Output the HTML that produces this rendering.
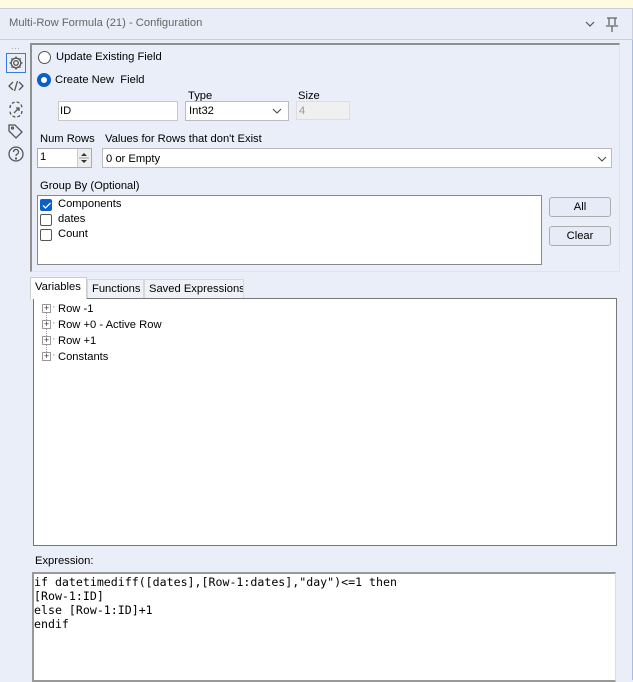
<!DOCTYPE html>
<html><head><meta charset="utf-8"><style>
*{box-sizing:border-box;margin:0;padding:0}
body{width:633px;height:680px;overflow:hidden;background:#e9eef8;font-family:"Liberation Sans",sans-serif;font-size:11.2px;color:#000;position:relative}
.a{position:absolute;white-space:nowrap}
.box{position:absolute;background:#fff;border:1px solid #c8c8c8}
.cb{position:absolute;width:12px;height:12px;border:1px solid #555;border-radius:2px;background:#fff}
.btn{position:absolute;width:62px;height:20px;background:#e6ebf7;border:1px solid #adadad;border-radius:3px;text-align:center;line-height:18px}
.pl{position:absolute;width:9px;height:9px;border:1px solid #999;background:#fff;font-size:9px;line-height:7px;text-align:center;color:#333}
.tab{position:absolute;top:279px;height:19px;line-height:18px;padding:0 4px;background:#eef1f7;border:1px solid #d8d8d8;border-bottom:none;white-space:nowrap;overflow:hidden}
</style></head><body>
<div class="a" style="left:0;top:0;width:633px;height:8px;background:#fffbe0"></div>
<div class="a" style="left:0;top:8px;width:633px;height:32px;background:#e8edf7;border:1px solid #c9cfdc;border-left:none"></div>
<div class="a" style="left:9px;top:17px;color:#666;font-size:11.2px">Multi-Row Formula (21) - Configuration</div>
<svg class="a" style="left:584px;top:17px" width="40" height="16"><path d="M2 5l4 4 4-4" stroke="#555" fill="none" stroke-width="1.2"/><path d="M23 1h10M25 1v7M31 1v7M22 9h12M28 9v6" stroke="#666" fill="none" stroke-width="1.3"/></svg>
<div class="a" style="left:632px;top:40px;width:1px;height:640px;background:#a9bbe0"></div>
<div class="a" style="left:11px;top:42px;color:#888;font-size:8px;letter-spacing:1px">...</div>
<div class="a" style="left:6px;top:53px;width:20px;height:20px;border:1px solid #3a7ad8"></div>
<svg class="a" style="left:6px;top:53px" width="22" height="115" fill="none" stroke="#555" stroke-width="1.3">
<circle cx="10" cy="10" r="2.3"/><path d="M10 3.5v2M10 14.5v2M3.5 10h2M14.5 10h2M5.4 5.4l1.4 1.4M13.2 13.2l1.4 1.4M5.4 14.6l1.4-1.4M13.2 6.8l1.4-1.4"/><circle cx="10" cy="10" r="4.8"/>
<path d="M7 29l-4 4 4 4M13 29l4 4-4 4M11.5 28l-3 10"/>
<path d="M4 55a6 6 0 0 1 12 0M16 58a6 6 0 0 1-12 0" stroke-dasharray="3 2"/><path d="M8 60l5-5M10 55h3v3"/>
<path d="M3 72v6l7 7 6-6-7-7z"/><circle cx="6.5" cy="75" r="1"/>
<circle cx="10" cy="101" r="7"/><path d="M7.5 99a2.5 2.5 0 1 1 3.5 2.2c-.8.4-1 1-1 1.8"/><circle cx="10" cy="105.5" r=".5"/>
</svg>
<div class="a" style="left:30px;top:43px;width:590px;height:229px;border-top:2px solid #909090;border-left:2px solid #909090;border-right:1px solid #dfe3ea;border-bottom:1px solid #dfe3ea"></div>
<div class="a" style="left:38px;top:51px;width:13px;height:13px;border:1px solid #555;border-radius:50%;background:#fff"></div>
<div class="a" style="left:56px;top:51px">Update Existing Field</div>
<div class="a" style="left:37px;top:73px;width:14px;height:14px;border-radius:50%;background:#0a5fc8"></div>
<div class="a" style="left:41px;top:77px;width:6px;height:6px;border-radius:50%;background:#fff"></div>
<div class="a" style="left:55px;top:74px">Create New&nbsp; Field</div>
<div class="a" style="left:188px;top:90px">Type</div>
<div class="a" style="left:298px;top:90px">Size</div>
<div class="box" style="left:58px;top:101px;width:120px;height:20px"></div>
<div class="a" style="left:60px;top:105px">ID</div>
<div class="box" style="left:185px;top:101px;width:104px;height:20px;border-color:#bbb"></div>
<div class="a" style="left:189px;top:105px">Int32</div>
<svg class="a" style="left:272px;top:108px" width="10" height="6"><path d="M1 1l4 4 4-4" stroke="#444" fill="none"/></svg>
<div class="a" style="left:296px;top:101px;width:54px;height:19px;background:#f0f0f0;border:1px solid #ddd"></div>
<div class="a" style="left:299px;top:105px;color:#999">4</div>
<div class="a" style="left:40px;top:133px">Num Rows</div>
<div class="a" style="left:105px;top:133px">Values for Rows that don't Exist</div>
<div class="box" style="left:37px;top:148px;width:55px;height:20px;border-color:#aaa"></div>
<div class="a" style="left:40px;top:151px">1</div>
<div class="a" style="left:77px;top:149px;width:14px;height:18px;background:#eee;border-left:1px solid #ccc"></div>
<svg class="a" style="left:78px;top:150px" width="12" height="16"><path d="M3 6l3-3 3 3zM3 10l3 3 3-3z" fill="#333"/><path d="M1 8h10" stroke="#999"/></svg>
<div class="box" style="left:102px;top:148px;width:510px;height:20px;border-color:#bbb"></div>
<div class="a" style="left:106px;top:153px">0 or Empty</div>
<svg class="a" style="left:597px;top:156px" width="10" height="6"><path d="M1 1l4 4 4-4" stroke="#444" fill="none"/></svg>
<div class="a" style="left:40px;top:180px">Group By (Optional)</div>
<div class="a" style="left:37px;top:195px;width:505px;height:70px;background:#fff;border:1px solid #888"></div>
<div class="cb" style="left:40px;top:199px;background:#0a5fc8;border-color:#0a5fc8"></div>
<svg class="a" style="left:41px;top:200px" width="11" height="11"><path d="M2 5.5l2.5 2.5 5-5" stroke="#fff" fill="none" stroke-width="1.3"/></svg>
<div class="a" style="left:58px;top:198px">Components</div>
<div class="cb" style="left:40px;top:214px"></div><div class="a" style="left:58px;top:213px">dates</div>
<div class="cb" style="left:40px;top:229px"></div><div class="a" style="left:58px;top:228px">Count</div>
<div class="btn" style="left:549px;top:197px">All</div>
<div class="btn" style="left:549px;top:226px">Clear</div>
<div class="tab" style="left:30px;top:277px;height:22px;width:57px;background:#fff;border-color:#ccc;z-index:2">Variables</div>
<div class="tab" style="left:87px;width:57px">Functions</div>
<div class="tab" style="left:144px;width:100px">Saved Expressions</div>
<div class="a" style="left:33px;top:298px;width:584px;height:248px;background:#fff;border:1px solid #777"></div>
<div class="a" style="left:46px;top:312px;height:48px;border-left:1px dotted #999"></div>
<div class="pl" style="left:42px;top:304px">+</div><div class="a" style="left:52px;top:301px;color:#888">·</div><div class="a" style="left:58px;top:303px">Row -1</div>
<div class="pl" style="left:42px;top:320px">+</div><div class="a" style="left:52px;top:317px;color:#888">·</div><div class="a" style="left:58px;top:319px">Row +0 - Active Row</div>
<div class="pl" style="left:42px;top:336px">+</div><div class="a" style="left:52px;top:333px;color:#888">·</div><div class="a" style="left:58px;top:335px">Row +1</div>
<div class="pl" style="left:42px;top:352px">+</div><div class="a" style="left:52px;top:349px;color:#888">·</div><div class="a" style="left:58px;top:351px">Constants</div>
<div class="a" style="left:35px;top:555px">Expression:</div>
<div class="a" style="left:32px;top:572px;width:584px;height:110px;background:#fff;border:2px solid #999;border-right:1px solid #ddd"></div>
<pre class="a" style="left:34px;top:575px;white-space:pre;font-family:'DejaVu Sans Mono','Liberation Mono',monospace;font-size:11.6px;line-height:14px">if datetimediff([dates],[Row-1:dates],"day")&lt;=1 then
[Row-1:ID]
else [Row-1:ID]+1
endif</pre>
</body></html>
